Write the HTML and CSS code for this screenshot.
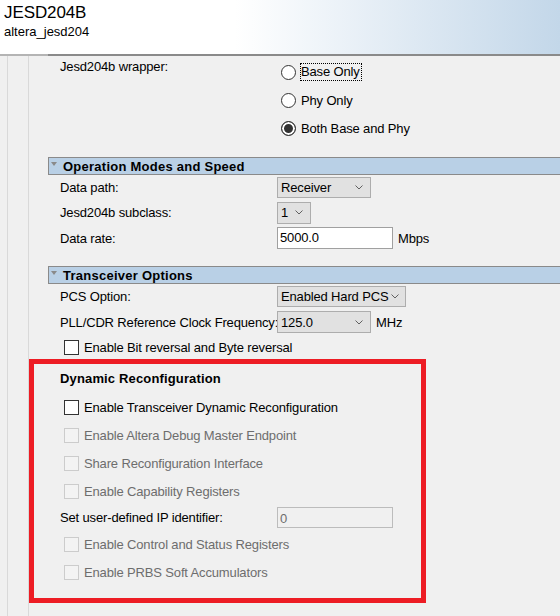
FILE: index.html
```html
<!DOCTYPE html>
<html lang="en">
<head>
    <meta charset="UTF-8">
    <meta name="viewport" content="width=device-width, initial-scale=1.0">
    <title>JESD204B - altera_jesd204</title>
    <link rel="stylesheet" href="styles.css">
</head>
<body>
    <header class="title-bar">
        <div class="title">JESD204B</div>
        <div class="subtitle">altera_jesd204</div>
    </header>
    <div class="title-rule"></div>

    <div class="outline">
        <div class="outline-inner">
            <div class="param-row wrapper-row">
                <div class="param-label">Jesd204b wrapper:</div>
                <div class="radio-list">
                    <label class="radio"><input type="radio" name="wrapper"><span class="focused">Base Only</span></label>
                    <label class="radio"><input type="radio" name="wrapper"><span>Phy Only</span></label>
                    <label class="radio"><input type="radio" name="wrapper" checked><span>Both Base and Phy</span></label>
                </div>
            </div>

            <div class="section-head"><span class="twisty"></span>Operation Modes and Speed</div>
            <div class="param-row">
                <div class="param-label">Data path:</div>
                <div class="combo combo-mid"><span>Receiver</span><svg class="chevron" width="8" height="5" viewBox="0 0 8 5"><polyline points="0.5,0.5 4,4 7.5,0.5"/></svg></div>
            </div>
            <div class="param-row">
                <div class="param-label">Jesd204b subclass:</div>
                <div class="combo combo-small"><span>1</span><svg class="chevron" width="8" height="5" viewBox="0 0 8 5"><polyline points="0.5,0.5 4,4 7.5,0.5"/></svg></div>
            </div>
            <div class="param-row tall">
                <div class="param-label">Data rate:</div>
                <div class="text-field">5000.0</div>
                <span class="unit">Mbps</span>
            </div>

            <div class="section-head"><span class="twisty"></span>Transceiver Options</div>
            <div class="param-row">
                <div class="param-label">PCS Option:</div>
                <div class="combo combo-wide"><span>Enabled Hard PCS</span><svg class="chevron" width="8" height="5" viewBox="0 0 8 5"><polyline points="0.5,0.5 4,4 7.5,0.5"/></svg></div>
            </div>
            <div class="param-row tall">
                <div class="param-label">PLL/CDR Reference Clock Frequency:</div>
                <div class="combo combo-mid"><span>125.0</span><svg class="chevron" width="8" height="5" viewBox="0 0 8 5"><polyline points="0.5,0.5 4,4 7.5,0.5"/></svg></div>
                <span class="unit">MHz</span>
            </div>
            <label class="check-row short"><input type="checkbox"><span>Enable Bit reversal and Byte reversal</span></label>

            <div class="highlight">
                <div class="group-title">Dynamic Reconfiguration</div>
                <label class="check-row"><input type="checkbox"><span>Enable Transceiver Dynamic Reconfiguration</span></label>
                <label class="check-row disabled"><input type="checkbox" disabled><span>Enable Altera Debug Master Endpoint</span></label>
                <label class="check-row disabled"><input type="checkbox" disabled><span>Share Reconfiguration Interface</span></label>
                <label class="check-row disabled"><input type="checkbox" disabled><span>Enable Capability Registers</span></label>
                <div class="param-row">
                    <div class="param-label">Set user-defined IP identifier:</div>
                    <div class="text-field disabled">0</div>
                </div>
                <label class="check-row disabled"><input type="checkbox" disabled><span>Enable Control and Status Registers</span></label>
                <label class="check-row disabled"><input type="checkbox" disabled><span>Enable PRBS Soft Accumulators</span></label>
            </div>
        </div>
    </div>
</body>
</html>
```

FILE: styles.css
```css
html, body {
    height: 100%;
}
body {
    display: flex;
    flex-direction: column;
    margin: 0;
    font-family: "Liberation Sans", Arial, sans-serif;
    font-size: 13px;
    letter-spacing: -0.15px;
    color: #000;
    background-color: #f0f0f0;
    overflow: hidden;
}
.title-bar {
    flex-shrink: 0;
    height: 54px;
    padding-left: 4px;
    background: linear-gradient(to right, #fff 42%, #c3d7e9 100%);
}
.title {
    padding-top: 2px;
    font-size: 17px;
    line-height: 22px;
    letter-spacing: -0.1px;
}
.subtitle {
    line-height: 16px;
    letter-spacing: 0;
}
.title-rule {
    flex-shrink: 0;
    height: 2px;
    background: linear-gradient(to right, #b4b4b4 48px, #8a8a8a 48px);
}

/* tree guide lines on the left */
.outline {
    flex: 1;
    margin-left: 7px;
    border-left: 1px solid #d9d9d9;
}
.outline-inner {
    height: 100%;
    margin-left: 20px;
    padding-left: 19px;
    border-left: 1px solid #d9d9d9;
}

.param-row {
    display: flex;
    align-items: center;
    height: 25px;
    padding-left: 12px;
}
.param-row.tall {
    height: 26px;
}
.param-label {
    width: 217px;
    flex-shrink: 0;
    white-space: nowrap;
}
.wrapper-row {
    height: auto;
    align-items: flex-start;
    padding-top: 2px;
}
.wrapper-row .param-label {
    line-height: 18px;
}
.radio-list {
    display: flex;
    flex-direction: column;
}
.radio {
    display: flex;
    align-items: center;
    height: 28px;
}
.radio input {
    appearance: none;
    width: 15px;
    height: 15px;
    margin: 0 5px 0 4px;
    border: 1px solid #333;
    border-radius: 50%;
    background-color: #fff;
}
.radio input:checked {
    background-color: #333;
    box-shadow: inset 0 0 0 2px #fff;
}
.focused {
    outline: 1px dotted #000;
    line-height: 16px;
    padding: 0 1px 0 0;
}

.section-head {
    display: flex;
    align-items: center;
    box-sizing: border-box;
    height: 18px;
    margin-top: 15px;
    padding-left: 2px;
    border: 1px solid #8a8a8a;
    border-right: none;
    background-color: #b9d0e6;
    font-weight: bold;
    letter-spacing: 0.25px;
}
.twisty {
    width: 0;
    height: 0;
    margin: -4px 6px 0 0;
    border-left: 3px solid transparent;
    border-right: 3px solid transparent;
    border-top: 4px solid #8a8a8a;
}

.combo {
    display: flex;
    align-items: center;
    justify-content: space-between;
    box-sizing: border-box;
    height: 21px;
    padding: 0 7px 0 3px;
    border: 1px solid #adadad;
    background-color: #e1e1e1;
}
.combo-mid {
    width: 94px;
}
.param-row.tall .combo-mid {
    height: 22px;
}
.combo-small {
    width: 34px;
    height: 22px;
}
.combo-wide {
    width: 129px;
    padding-right: 6px;
}
.chevron polyline {
    fill: none;
    stroke: #606060;
    stroke-width: 1;
}
.text-field {
    box-sizing: border-box;
    width: 116px;
    height: 22px;
    padding: 2px 0 0 2px;
    border: 1px solid #a0a0a0;
    background-color: #fff;
}
.text-field.disabled {
    height: 21px;
    padding-top: 3px;
    border-color: #bcbcbc;
    background-color: #f0f0f0;
    color: #6d6d6d;
}
.unit {
    margin-left: 5px;
}

.check-row {
    display: flex;
    align-items: center;
    height: 28px;
    padding-left: 12px;
}
.check-row.short {
    height: 24px;
}
.check-row input {
    appearance: none;
    width: 15px;
    height: 15px;
    margin: 0 5px 0 4px;
    border: 1px solid #333;
    background-color: #fff;
}
.check-row.disabled {
    color: #6d6d6d;
}
.check-row.disabled input {
    border-color: #cccccc;
    background-color: #f3f3f3;
}

/* red frame round the reconfiguration group */
.highlight {
    box-sizing: border-box;
    width: 397px;
    margin-left: -19px;
    padding: 0 0 12px 14px;
    border: 5px solid #ed1c24;
}
.group-title {
    height: 29px;
    line-height: 29px;
    padding-left: 12px;
    font-weight: bold;
    letter-spacing: 0.15px;
}
```
